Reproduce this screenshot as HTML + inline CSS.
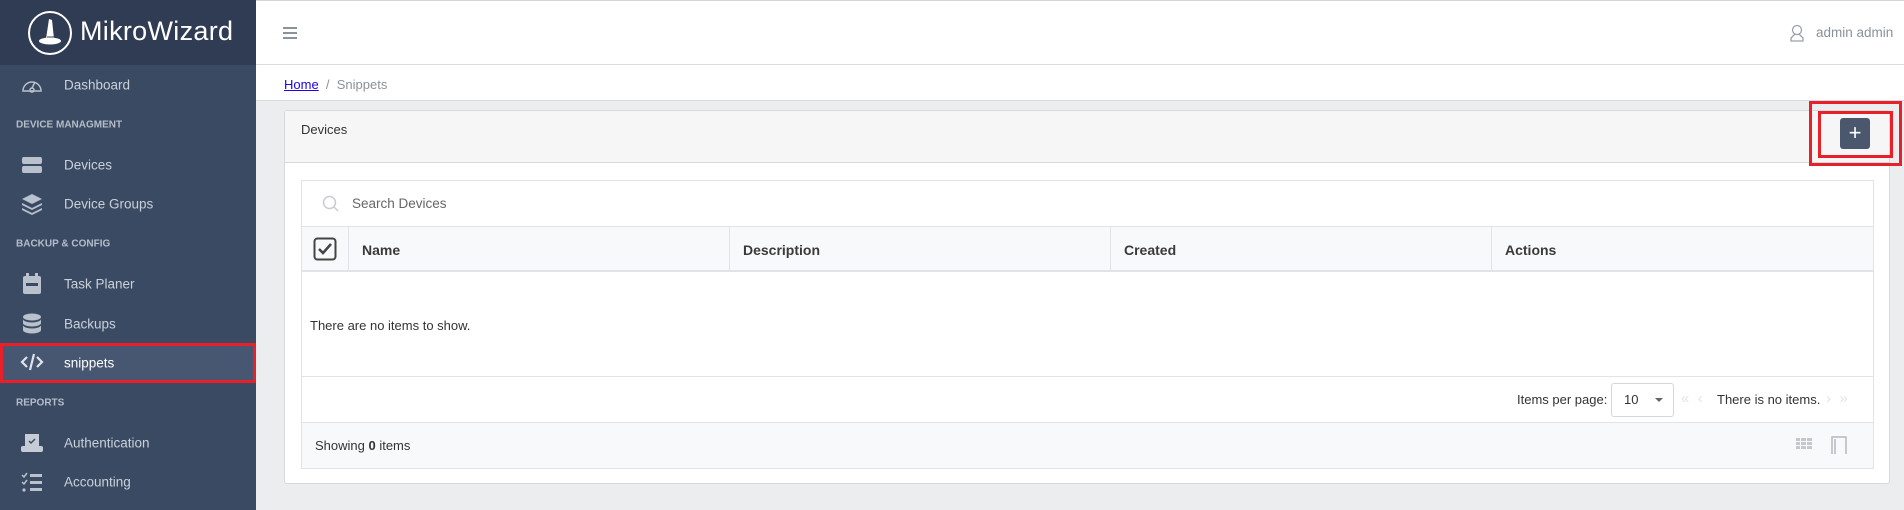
<!DOCTYPE html>
<html><head><meta charset="utf-8"><style>
*{box-sizing:border-box;margin:0;padding:0}
body{width:1904px;height:510px;overflow:hidden;font-family:"Liberation Sans",sans-serif;background:#ebedef;position:relative;color:#333}
.abs{position:absolute}
#side{left:0;top:0;width:256px;height:510px;background:#3b4a63}
#logo{left:0;top:0;width:256px;height:65px;background:#303c54}
.nav{position:absolute;left:64px;font-size:13.5px;color:#c9d0da;transform:translateY(-50%)}
.sec{position:absolute;left:16px;font-size:10px;font-weight:bold;color:#b5bdc9;transform:translateY(-50%)}
.ic{position:absolute;left:20px;width:24px;height:24px;transform:translateY(-50%)}
</style></head><body>
<div class="abs" style="left:0;top:0;width:1904px;height:1px;background:#d5d5d5"></div>
<div id="side" class="abs"></div>
<div id="logo" class="abs">
<svg class="abs" style="left:27px;top:10px" width="46" height="46" viewBox="0 0 46 46"><circle cx="23" cy="23" r="21" fill="none" stroke="#fff" stroke-width="2"/><path d="M22 9 L25 10 L27 29 L19 29 Z" fill="#fff"/><ellipse cx="23" cy="31" rx="11" ry="3.5" fill="#fff"/><path d="M20 27 h7" stroke="#303c54" stroke-width="1"/></svg>
<div class="abs" style="left:80px;top:16px;font-size:27px;color:#fff;letter-spacing:0.3px">MikroWizard</div>
</div>
<div class="abs" style="left:0;top:343px;width:256px;height:40px;background:#475671;border:3px solid #e8202a"></div>
<svg class="ic" style="top:85px" viewBox="0 0 24 24" fill="none" stroke="#b9c1cc" stroke-width="1.5"><path d="M3 18 A9 9 0 1 1 21 18 Z"/><circle cx="12" cy="17" r="2"/><path d="M12 15 L15 9"/></svg>
<div class="nav" style="top:85px">Dashboard</div>
<div class="sec" style="top:125px">DEVICE MANAGMENT</div>
<svg class="ic" style="top:165px" viewBox="0 0 24 24"><rect x="2" y="4" width="20" height="7" rx="2" fill="#b9c1cc"/><rect x="2" y="13" width="20" height="7" rx="2" fill="#b9c1cc"/></svg>
<div class="nav" style="top:165px">Devices</div>
<svg class="ic" style="top:204px" viewBox="0 0 24 24" fill="#b9c1cc"><path d="M12 2 L22 7 L12 12 L2 7Z"/><path d="M2 11 L12 16 L22 11 L22 13 L12 18 L2 13Z"/><path d="M2 16 L12 21 L22 16 L22 18 L12 23 L2 18Z"/></svg>
<div class="nav" style="top:204px">Device Groups</div>
<div class="sec" style="top:244px">BACKUP &amp; CONFIG</div>
<svg class="ic" style="top:284px" viewBox="0 0 24 24" fill="#b9c1cc"><rect x="3" y="4" width="18" height="18" rx="2"/><rect x="6" y="1" width="3" height="5"/><rect x="15" y="1" width="3" height="5"/><rect x="6" y="11" width="12" height="3" fill="#3b4a63"/></svg>
<div class="nav" style="top:284px">Task Planer</div>
<svg class="ic" style="top:324px" viewBox="0 0 24 24" fill="#b9c1cc"><ellipse cx="12" cy="5" rx="9" ry="3.5"/><path d="M3 7 v4 a9 3.5 0 0 0 18 0 v-4 a9 3.5 0 0 1 -18 0Z"/><path d="M3 13 v5 a9 3.5 0 0 0 18 0 v-5 a9 3.5 0 0 1 -18 0Z"/></svg>
<div class="nav" style="top:324px">Backups</div>
<svg class="ic" style="top:362px" viewBox="0 0 24 24" fill="none" stroke="#dfe4ea" stroke-width="2.2"><path d="M7 7 L2 12 L7 17"/><path d="M17 7 L22 12 L17 17"/><path d="M14 4 L10 20"/></svg>
<div class="nav" style="top:363px;color:#fff">snippets</div>
<div class="sec" style="top:403px">REPORTS</div>
<svg class="ic" style="top:443px" viewBox="0 0 24 24"><rect x="5" y="3" width="14" height="13" fill="#c5ccd6"/><path d="M9 10 l2 2 l4 -4" stroke="#3b4a63" stroke-width="1.5" fill="none"/><rect x="1" y="15" width="22" height="6" rx="2" fill="#c5ccd6"/></svg>
<div class="nav" style="top:443px">Authentication</div>
<svg class="ic" style="top:482px" viewBox="0 0 24 24" fill="#b9c1cc"><rect x="10" y="4" width="12" height="3"/><rect x="10" y="11" width="12" height="3"/><rect x="10" y="18" width="12" height="3"/><path d="M2 5 l2 2 l3 -4" stroke="#b9c1cc" stroke-width="1.5" fill="none"/><path d="M2 12 l2 2 l3 -4" stroke="#b9c1cc" stroke-width="1.5" fill="none"/><circle cx="4" cy="20" r="1.6"/></svg>
<div class="nav" style="top:482px">Accounting</div>

<div class="abs" style="left:256px;top:1px;width:1648px;height:64px;background:#fff;border-bottom:1px solid #d8dbe0"></div>
<div class="abs" style="left:283px;top:27px;width:14px;height:2px;background:#8a929c;box-shadow:0 5px 0 #8a929c,0 10px 0 #8a929c"></div>
<svg class="abs" style="left:1789px;top:24px" width="16" height="18" viewBox="0 0 16 18" fill="none" stroke="#9aa1ab" stroke-width="1.3"><circle cx="8" cy="6" r="4.5"/><path d="M6 10 L2 14 V17 H14 V14 L10 10"/></svg>
<div class="abs" style="left:1816px;top:25px;font-size:13.5px;color:#8a919c">admin admin</div>
<div class="abs" style="left:256px;top:65px;width:1648px;height:36px;background:#fff;border-bottom:1px solid #d8dbe0"></div>
<div class="abs" style="left:284px;top:77px;font-size:13px;color:#8a919c"><span style="text-decoration:underline;color:#2200ee">Home</span>&nbsp;&nbsp;/&nbsp;&nbsp;Snippets</div>
<div class="abs" style="left:284px;top:110px;width:1606px;height:374px;background:#fff;border:1px solid #d6d9dd;border-radius:3px"></div>
<div class="abs" style="left:285px;top:111px;width:1604px;height:52px;background:#f6f6f6;border-bottom:1px solid #d6d9dd"></div>
<div class="abs" style="left:301px;top:122px;font-size:13px;color:#333">Devices</div>
<div class="abs" style="left:1840px;top:118px;width:30px;height:31px;background:#4b576d;border-radius:3px;color:#fff;font-size:22px;line-height:30px;text-align:center">+</div>
<div class="abs" style="left:1809px;top:101px;width:93px;height:65px;border:3px solid #e8202a"></div>
<div class="abs" style="left:1818px;top:111px;width:75px;height:47px;border:3px solid #e8202a"></div>
<div class="abs" style="left:301px;top:180px;width:1573px;height:289px;border:1px solid #e1e3e6;background:#fff"></div>
<svg class="abs" style="left:322px;top:195px" width="18" height="18" viewBox="0 0 18 18" fill="none" stroke="#c8cbd0" stroke-width="1.5"><circle cx="7.5" cy="7.5" r="6"/><path d="M12 12 L16 16"/></svg>
<div class="abs" style="left:352px;top:196px;font-size:13.5px;color:#666">Search Devices</div>
<div class="abs" style="left:302px;top:226px;width:1571px;height:46px;background:#f8f9fa;border-top:1px solid #e1e3e6;border-bottom:2px solid #e1e3e6"></div>
<svg class="abs" style="left:313px;top:237px" width="24" height="24" viewBox="0 0 24 24" fill="none" stroke="#444" stroke-width="2"><rect x="1.5" y="1.5" width="21" height="21" rx="3"/><path d="M6 12 L10 16 L18 7" stroke-width="2.5"/></svg>
<div class="abs" style="left:348px;top:227px;width:1px;height:45px;background:#e1e3e6"></div>
<div class="abs" style="left:729px;top:227px;width:1px;height:45px;background:#e1e3e6"></div>
<div class="abs" style="left:1110px;top:227px;width:1px;height:45px;background:#e1e3e6"></div>
<div class="abs" style="left:1491px;top:227px;width:1px;height:45px;background:#e1e3e6"></div>
<div class="abs" style="left:362px;top:242px;font-size:14px;font-weight:bold;color:#3a3a3a">Name</div>
<div class="abs" style="left:743px;top:242px;font-size:14px;font-weight:bold;color:#3a3a3a">Description</div>
<div class="abs" style="left:1124px;top:242px;font-size:14px;font-weight:bold;color:#3a3a3a">Created</div>
<div class="abs" style="left:1505px;top:242px;font-size:14px;font-weight:bold;color:#3a3a3a">Actions</div>
<div class="abs" style="left:310px;top:318px;font-size:13px;color:#333">There are no items to show.</div>
<div class="abs" style="left:302px;top:376px;width:1571px;height:1px;background:#e1e3e6"></div>
<div class="abs" style="left:1517px;top:392px;font-size:13px;color:#333">Items per page:</div>
<div class="abs" style="left:1611px;top:383px;width:63px;height:34px;border:1px solid #d3d6da;border-radius:3px"></div>
<div class="abs" style="left:1624px;top:392px;font-size:13px;color:#333">10</div>
<div class="abs" style="left:1655px;top:398px;width:0;height:0;border-left:4px solid transparent;border-right:4px solid transparent;border-top:4px solid #666"></div>
<div class="abs" style="left:1681px;top:390px;font-size:15px;color:#e2e4e7">«&nbsp;&nbsp;‹</div>
<div class="abs" style="left:1717px;top:392px;font-size:13px;color:#333">There is no items.</div>
<div class="abs" style="left:1826px;top:390px;font-size:15px;color:#e2e4e7">›&nbsp;&nbsp;»</div>
<div class="abs" style="left:302px;top:422px;width:1571px;height:46px;background:#f8f9fa;border-top:1px solid #e1e3e6"></div>
<div class="abs" style="left:315px;top:438px;font-size:13px;color:#333">Showing <b>0</b> items</div>
<svg class="abs" style="left:1796px;top:438px" width="16" height="14" viewBox="0 0 16 14" fill="#c4c7cc"><rect x="0" y="0" width="4" height="3"/><rect x="5" y="0" width="5" height="3"/><rect x="11" y="0" width="5" height="3"/><rect x="0" y="4" width="4" height="3"/><rect x="5" y="4" width="5" height="3"/><rect x="11" y="4" width="5" height="3"/><rect x="0" y="8" width="4" height="3"/><rect x="5" y="8" width="5" height="3"/><rect x="11" y="8" width="5" height="3"/></svg>
<svg class="abs" style="left:1831px;top:436px" width="16" height="18" viewBox="0 0 16 18" fill="none" stroke="#b4b8be" stroke-width="1.5"><path d="M1 18 V1 H15 V18"/><path d="M4 18 V3"/></svg>
</body></html>
